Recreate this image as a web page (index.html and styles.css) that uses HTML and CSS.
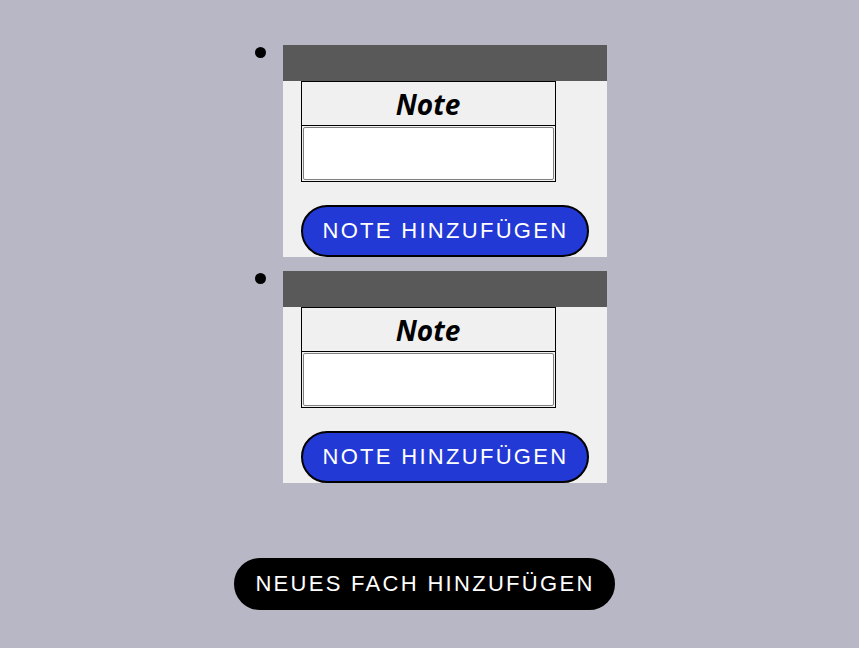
FILE: index.html
```html
<!DOCTYPE html>
<html lang="de">
<head>
<meta charset="utf-8">
<title>Noten</title>
<link rel="stylesheet" href="styles.css">
</head>
<body>
<div class="app">
  <ul class="subjects">
    <li class="subject">
      <span class="bullet"></span>
      <div class="card">
        <div class="card-head"></div>
        <table class="grades">
          <thead><tr><th>Note</th></tr></thead>
          <tbody><tr><td><input type="text" class="grade-input"></td></tr></tbody>
        </table>
        <button class="btn btn-blue">Note hinzufügen</button>
      </div>
    </li>
    <li class="subject">
      <span class="bullet"></span>
      <div class="card">
        <div class="card-head"></div>
        <table class="grades">
          <thead><tr><th>Note</th></tr></thead>
          <tbody><tr><td><input type="text" class="grade-input"></td></tr></tbody>
        </table>
        <button class="btn btn-blue">Note hinzufügen</button>
      </div>
    </li>
  </ul>
  <button class="btn btn-black">Neues Fach hinzufügen</button>
</div>
</body>
</html>
```
FILE: styles.css
```css
html, body {
  margin: 0;
  padding: 0;
  background: #b8b7c6;
}

.app {
  display: flex;
  flex-direction: column;
  align-items: center;
  padding: 45px 10px 0 0;
  font-family: "Liberation Sans", Arial, sans-serif;
}

.subjects {
  list-style: none;
  margin: 0;
  padding: 0;
  display: flex;
  flex-direction: column;
  gap: 14px;
}

.subject {
  display: grid;
  grid-template-columns: 40px 324px;
  align-items: start;
}

.bullet {
  width: 11px;
  height: 11px;
  border-radius: 50%;
  background: #000;
  margin: 2px 0 0 12px;
}

.card {
  background: #f0f0f0;
  display: flex;
  flex-direction: column;
  align-items: flex-start;
}

.card-head {
  align-self: stretch;
  height: 36px;
  background: #595959;
}

.grades {
  margin-left: 18px;
  width: 255px;
  border-collapse: collapse;
  border: 1px solid #000;
}

.grades th {
  border: 1px solid #000;
  padding: 0;
  height: 43px;
  font-family: "Open Sans", "Noto Sans", sans-serif;
  font-style: italic;
  font-weight: 700;
  font-size: 28px;
  line-height: 38px;
  color: #000;
  text-align: center;
}

.grades td {
  border: 1px solid #000;
  padding: 1px;
}

.grade-input {
  display: block;
  box-sizing: border-box;
  width: 100%;
  height: 53px;
  margin: 0;
  border: 1px solid #808080;
  border-radius: 2px;
  background: #fff;
}

.btn {
  font-family: "Liberation Sans", Arial, sans-serif;
  font-size: 22px;
  letter-spacing: 2.3px;
  text-transform: uppercase;
  color: #fff;
  border: 2px solid #000;
  border-radius: 30px;
  padding: 12px 19px 12px 20px;
  line-height: 24px;
  cursor: pointer;
}

.btn-blue {
  background: #2239d6;
  margin: 23px 0 0 18px;
}

.btn-black {
  background: #000;
  margin-top: 75px;
  padding-left: 19px;
  padding-right: 18px;
}
```
